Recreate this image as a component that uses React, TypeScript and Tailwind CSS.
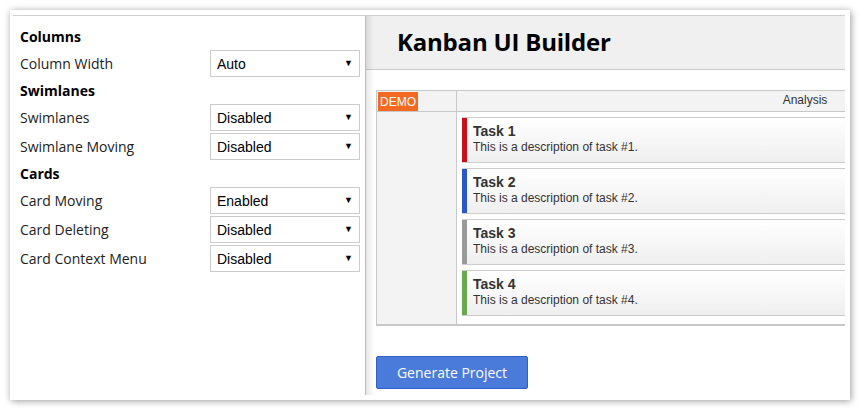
const groups = [
  {
    title: 'Columns',
    rows: [{ label: 'Column Width', value: 'Auto' }],
  },
  {
    title: 'Swimlanes',
    rows: [
      { label: 'Swimlanes', value: 'Disabled' },
      { label: 'Swimlane Moving', value: 'Disabled' },
    ],
  },
  {
    title: 'Cards',
    rows: [
      { label: 'Card Moving', value: 'Enabled' },
      { label: 'Card Deleting', value: 'Disabled' },
      { label: 'Card Context Menu', value: 'Disabled' },
    ],
  },
];

const tasks = [
  { name: 'Task 1', color: 'bg-[#c8101a]' },
  { name: 'Task 2', color: 'bg-[#2a56c8]' },
  { name: 'Task 3', color: 'bg-[#9a9a9a]' },
  { name: 'Task 4', color: 'bg-[#6aa84f]' },
];

function FakeSelect({ value }: { value: string }) {
  return (
    <div className="w-[150px] h-[27px] border border-[#cccccc] bg-white flex items-center justify-between pl-[6px] pr-[6px] text-[14px] text-black font-['Liberation_Sans',sans-serif]">
      <span className="pt-[1px]">{value}</span>
      <span className="text-[9px] leading-none">▼</span>
    </div>
  );
}

export default function App() {
  return (
    <div className="w-[860px] h-[410px] bg-white overflow-hidden font-['Open_Sans',sans-serif]">
      <div className="ml-[10px] mt-[10px] w-[840px] h-[390px] bg-white shadow-[1px_1px_7px_rgba(0,0,0,0.4)]">
        <div className="ml-[3px] pt-[5px] w-[832px]">
          <div className="flex h-[380px] border-t border-[#d0d0d0]">
            {/* Settings */}
            <div className="w-[353px] shrink-0 border-r border-[#bdbdbd] pt-[9px] pl-[7px]">
              {groups.map((g) => (
                <div key={g.title}>
                  <div className="h-[25px] flex items-center pb-[3px] text-[14px] font-bold text-black">{g.title}</div>
                  {g.rows.map((r) => (
                    <div key={r.label} className="h-[29px] flex items-start">
                      <div className="w-[190px] h-[27px] flex items-center text-[14px] text-[#222]">{r.label}</div>
                      <FakeSelect value={r.value} />
                    </div>
                  ))}
                </div>
              ))}
            </div>

            {/* Preview */}
            <div className="flex-1 overflow-hidden relative">
              <div className="h-[54px] bg-[#f0f0f0] border-b border-[#cccccc] flex items-center pl-[31px] pb-[1px]">
                <h1 className="text-[24px] font-bold text-black tracking-[-0.2px]">Kanban UI Builder</h1>
              </div>

              <div className="ml-[10px] mt-[20px] w-[800px] border-l border-t border-b-2 border-[#c8c8c8] font-['Liberation_Sans',sans-serif]">
                <div className="flex h-[21px] bg-[#f3f3f3] border-b border-[#c8c8c8]">
                  <div className="w-[80px] shrink-0 border-r border-[#c8c8c8] flex items-start pl-[1px] pt-[1px]">
                    <div className="h-[19px] flex items-center px-[2px] bg-[#f26a22] text-white text-[12px] leading-none">DEMO</div>
                  </div>
                  <div className="w-[696px] shrink-0 flex items-center justify-center text-[12px] text-[#333] pb-[3px]">Analysis</div>
                </div>
                <div className="flex">
                  <div className="w-[80px] shrink-0 bg-[#f3f3f3] border-r border-[#c8c8c8]" />
                  <div className="w-[696px] shrink-0 pl-[5px] pt-[5px] pb-[8px] flex flex-col gap-[5px]">
                    {tasks.map((t, i) => (
                      <div
                        key={t.name}
                        className="h-[46px] flex border-t border-b border-r border-[#cccccc] bg-gradient-to-b from-white to-[#efefef]"
                      >
                        <div className={`w-[5px] shrink-0 ${t.color}`} />
                        <div className="pl-[6px] pt-[5px] text-[#333]">
                          <div className="text-[14px] font-bold leading-[17px]">{t.name}</div>
                          <div className="text-[12px] leading-[15px]">This is a description of task #{i + 1}.</div>
                        </div>
                      </div>
                    ))}
                  </div>
                </div>
              </div>

              <button className="ml-[10px] mt-[30px] w-[152px] h-[33px] bg-[#4a7bdb] border border-[#2f5fc8] rounded-[2px] text-white text-[14px]">
                Generate Project
              </button>

              <div className="absolute left-0 top-0 bottom-0 w-[8px] bg-gradient-to-r from-black/10 to-transparent pointer-events-none" />
            </div>
          </div>
        </div>
      </div>
    </div>
  );
}
